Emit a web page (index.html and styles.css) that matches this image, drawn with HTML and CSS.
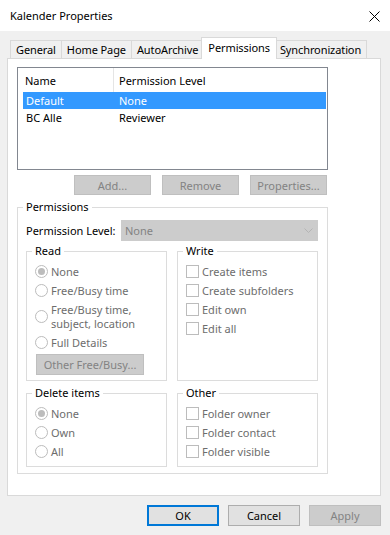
FILE: index.html
```html
<!DOCTYPE html>
<html lang="en">
<head>
  <meta charset="UTF-8">
  <title>Kalender Properties</title>
  <link rel="stylesheet" href="styles.css">
</head>
<body>
  <div class="titlebar">
    <span class="title">Kalender Properties</span>
    <svg class="close" width="11" height="11" viewBox="0 0 11 11">
      <path d="M0.5 0.5 L10.5 10.5 M10.5 0.5 L0.5 10.5" stroke="#000" stroke-width="1" fill="none"/>
    </svg>
  </div>

  <div class="tabs">
    <div class="tab">General</div>
    <div class="tab">Home Page</div>
    <div class="tab">AutoArchive</div>
    <div class="tab active">Permissions</div>
    <div class="tab">Synchronization</div>
  </div>

  <div class="panel">
    <div class="listbox">
      <div class="list-head">
        <div class="col-name">Name</div>
        <div class="col-level">Permission Level</div>
      </div>
      <div class="list-row selected"><span>Default</span><span>None</span></div>
      <div class="list-row"><span>BC Alle</span><span>Reviewer</span></div>
    </div>

    <div class="list-buttons">
      <button class="btn disabled">Add...</button>
      <button class="btn disabled">Remove</button>
      <button class="btn disabled">Properties...</button>
    </div>

    <fieldset class="group perms">
      <legend>Permissions</legend>
      <div class="level-row">
        <label>Permission Level:</label>
        <div class="dropdown">
          <span>None</span>
          <svg width="9" height="5" viewBox="0 0 9 5"><path d="M0.5 0.5 L4.5 4.5 L8.5 0.5" stroke="#b4b4b4" fill="none"/></svg>
        </div>
      </div>

      <div class="group-grid">
        <fieldset class="group">
          <legend>Read</legend>
          <div class="opt"><span class="radio checked"></span>None</div>
          <div class="opt"><span class="radio"></span>Free/Busy time</div>
          <div class="opt two-line"><span class="radio"></span><span>Free/Busy time,<br>subject, location</span></div>
          <div class="opt"><span class="radio"></span>Full Details</div>
          <button class="btn disabled other-btn">Other Free/Busy...</button>
        </fieldset>

        <fieldset class="group">
          <legend>Write</legend>
          <div class="opt"><span class="check"></span>Create items</div>
          <div class="opt"><span class="check"></span>Create subfolders</div>
          <div class="opt"><span class="check"></span>Edit own</div>
          <div class="opt"><span class="check"></span>Edit all</div>
        </fieldset>

        <fieldset class="group">
          <legend>Delete items</legend>
          <div class="opt"><span class="radio checked"></span>None</div>
          <div class="opt"><span class="radio"></span>Own</div>
          <div class="opt"><span class="radio"></span>All</div>
        </fieldset>

        <fieldset class="group">
          <legend>Other</legend>
          <div class="opt"><span class="check"></span>Folder owner</div>
          <div class="opt"><span class="check"></span>Folder contact</div>
          <div class="opt"><span class="check"></span>Folder visible</div>
        </fieldset>
      </div>
    </fieldset>
  </div>

  <div class="dialog-buttons">
    <button class="btn default">OK</button>
    <button class="btn">Cancel</button>
    <button class="btn disabled">Apply</button>
  </div>
</body>
</html>
```

FILE: styles.css
```css
* { box-sizing: border-box; }

body {
  margin: 0;
  width: 390px;
  height: 535px;
  background: #f0f0f0;
  font-family: "Noto Sans", "Open Sans", sans-serif;
  font-size: 11px;
  color: #000;
  overflow: hidden;
}

.titlebar {
  height: 31px;
  background: #fff;
  display: flex;
  align-items: center;
  justify-content: space-between;
  padding: 0 10px;
  line-height: 31px;
}
.close { display: block; margin-top: 1px; }

/* tabs */
.tabs {
  display: flex;
  align-items: flex-end;
  padding: 6px 0 0 10px;
}
.tab {
  height: 18px;
  line-height: 17px;
  padding: 0 5px;
  border: 1px solid #d9d9d9;
  border-bottom: none;
  margin-left: -1px;
  background: #f0f0f0;
  white-space: nowrap;
  letter-spacing: -0.1px;
}
.tab:first-child { margin-left: 0; }
.tab.active {
  height: 22px;
  padding: 1px 6px 0;
  margin: 0 -2px -1px -3px;
  background: #fff;
  position: relative;
  z-index: 1;
}

.panel {
  margin-left: 7px;
  width: 374px;
  height: 438px;
  background: #fff;
  border: 1px solid #d9d9d9;
  padding: 8px 9px;
}

/* list */
.listbox {
  width: 311px;
  height: 103px;
  border: 1px solid #828790;
  background: #fff;
}
.list-head {
  display: flex;
  height: 24px;
  line-height: 16px;
  padding-top: 5px;
}
.col-name {
  width: 96px;
  padding-left: 7px;
  border-right: 1px solid #e5e5e5;
  margin-top: -5px;
  padding-top: 5px;
}
.col-level { padding-left: 5px; }
.list-row {
  display: grid;
  grid-template-columns: 93px 1fr;
  height: 17px;
  line-height: 17px;
  margin: 0 1px 0 5px;
  padding-left: 3px;
}
.list-row.selected { background: #3399ff; color: #fff; }

/* buttons */
.btn {
  font: inherit;
  color: #000;
  height: 21px;
  width: 72px;
  padding: 0;
  background: #e1e1e1;
  border: 1px solid #adadad;
  line-height: 17px;
}
.btn.disabled {
  background: #cccccc;
  border-color: #bfbfbf;
  color: #838383;
}
.btn.default {
  border: 2px solid #0078d7;
}

.list-buttons {
  width: 311px;
  display: flex;
  justify-content: flex-end;
  gap: 11px;
  margin-top: 5px;
  padding-right: 1px;
}
.list-buttons .btn { width: 77px; height: 20px; }

/* group boxes */
.group {
  margin: 0;
  border: 1px solid #dcdcdc;
  padding: 3px 8px 5px;
  min-width: 0;
}
.group legend {
  padding: 0 3px;
  margin-left: -3px;
  line-height: 16px;
}
.perms {
  width: 311px;
  margin-top: 4px;
  padding: 5px 9px 6px 8px;
}
.level-row {
  display: flex;
  align-items: center;
  height: 21px;
}
.level-row label { width: 95px; }
.dropdown {
  width: 197px;
  height: 21px;
  line-height: 21px;
  background: #cccccc;
  color: #838383;
  padding: 0 4px;
  display: flex;
  justify-content: space-between;
  align-items: center;
}
.dropdown svg { margin-right: 1px; }

.group-grid {
  display: grid;
  grid-template-columns: 141px 141px;
  column-gap: 10px;
  row-gap: 4px;
  margin-top: 2px;
}

.opt {
  display: flex;
  align-items: center;
  gap: 3px;
  height: 19px;
  color: #6d6d6d;
  white-space: nowrap;
}
.opt.two-line {
  height: 33px;
  line-height: 14px;
}
.radio, .check {
  width: 13px;
  height: 13px;
  border: 1px solid #bcbcbc;
  background: #fff;
  flex-shrink: 0;
}
.radio { border-radius: 50%; display: flex; align-items: center; justify-content: center; }
.radio.checked::after {
  content: "";
  width: 7px;
  height: 7px;
  border-radius: 50%;
  background: #bcbcbc;
}

.other-btn {
  width: 108px;
  margin: 2px 0 0 1px;
  display: block;
}

.dialog-buttons {
  display: flex;
  justify-content: flex-end;
  gap: 9px;
  margin: 9px 9px 0 0;
}
```
